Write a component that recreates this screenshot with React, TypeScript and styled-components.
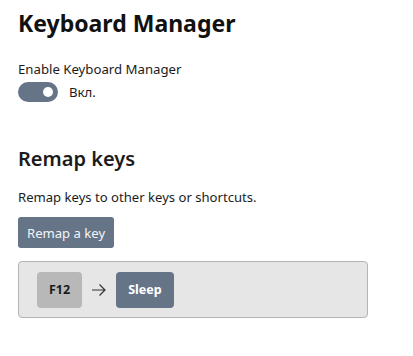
import React, { useState } from 'react';
import styled, { createGlobalStyle } from 'styled-components';

const GlobalStyle = createGlobalStyle`
  html, body {
    margin: 0;
    padding: 0;
    background: #fff;
  }
  body {
    font-family: "Noto Sans", "Open Sans", sans-serif;
    color: #1b1b1b;
  }
`;

const Page = styled.div`
  display: flex;
  flex-direction: column;
  padding: 6px 18px 0 18px;
`;

const Title = styled.h1`
  margin: 0;
  font-size: 23px;
  font-weight: 700;
  line-height: 34px;
  color: #111;
`;

const Label = styled.div`
  margin-top: 20px;
  font-size: 13.2px;
  line-height: 18px;
`;

const ToggleRow = styled.div`
  display: flex;
  align-items: center;
  gap: 11px;
  margin-top: 4px;
  font-size: 13.2px;
`;

const Track = styled.button<{ on: boolean }>`
  position: relative;
  width: 40px;
  height: 20px;
  border: none;
  padding: 0;
  border-radius: 10px;
  background: ${p => (p.on ? '#667487' : '#c4c4c4')};
  cursor: pointer;
`;

const Knob = styled.span<{ on: boolean }>`
  position: absolute;
  top: 5px;
  left: ${p => (p.on ? '25px' : '5px')};
  width: 10px;
  height: 10px;
  border-radius: 50%;
  background: #fff;
`;

const SectionTitle = styled.h2`
  margin: 44px 0 0 0;
  font-size: 20px;
  font-weight: 600;
  line-height: 26px;
`;

const Description = styled.p`
  margin: 16px 0 0 0;
  font-size: 13.1px;
  line-height: 18px;
`;

const PrimaryButton = styled.button`
  align-self: flex-start;
  margin-top: 11px;
  height: 31px;
  padding: 0 9px;
  border: none;
  border-radius: 3px;
  background: #667487;
  color: #f4f5f7;
  font-family: inherit;
  font-size: 13.1px;
`;

const MappingBox = styled.div`
  display: flex;
  align-items: center;
  width: 350px;
  box-sizing: border-box;
  height: 57px;
  margin-top: 13px;
  padding: 0 18px;
  background: #e6e6e6;
  border: 1px solid #b4b4b4;
  border-radius: 4px;
`;

const KeyCap = styled.div<{ target?: boolean }>`
  display: flex;
  align-items: center;
  justify-content: center;
  height: 36px;
  padding: 0 12px;
  border-radius: 4px;
  background: ${p => (p.target ? '#667487' : '#b8b8b8')};
  color: ${p => (p.target ? '#fff' : '#1b1b1b')};
  font-size: 12.5px;
  font-weight: 700;
`;

const Arrow = styled.svg`
  margin: 0 10px;
`;

export default function App() {
  const [on, setOn] = useState(true);
  return (
    <>
      <GlobalStyle />
      <Page>
        <Title>Keyboard Manager</Title>
        <Label>Enable Keyboard Manager</Label>
        <ToggleRow>
          <Track on={on} onClick={() => setOn(!on)}>
            <Knob on={on} />
          </Track>
          <span>{on ? 'Вкл.' : 'Откл.'}</span>
        </ToggleRow>
        <SectionTitle>Remap keys</SectionTitle>
        <Description>Remap keys to other keys or shortcuts.</Description>
        <PrimaryButton>Remap a key</PrimaryButton>
        <MappingBox>
          <KeyCap>F12</KeyCap>
          <Arrow width="14" height="12" viewBox="0 0 14 12" fill="none" stroke="#333" strokeWidth="1.2">
            <path d="M0 6h13M7.5 0.5L13 6l-5.5 5.5" />
          </Arrow>
          <KeyCap target>Sleep</KeyCap>
        </MappingBox>
      </Page>
    </>
  );
}
